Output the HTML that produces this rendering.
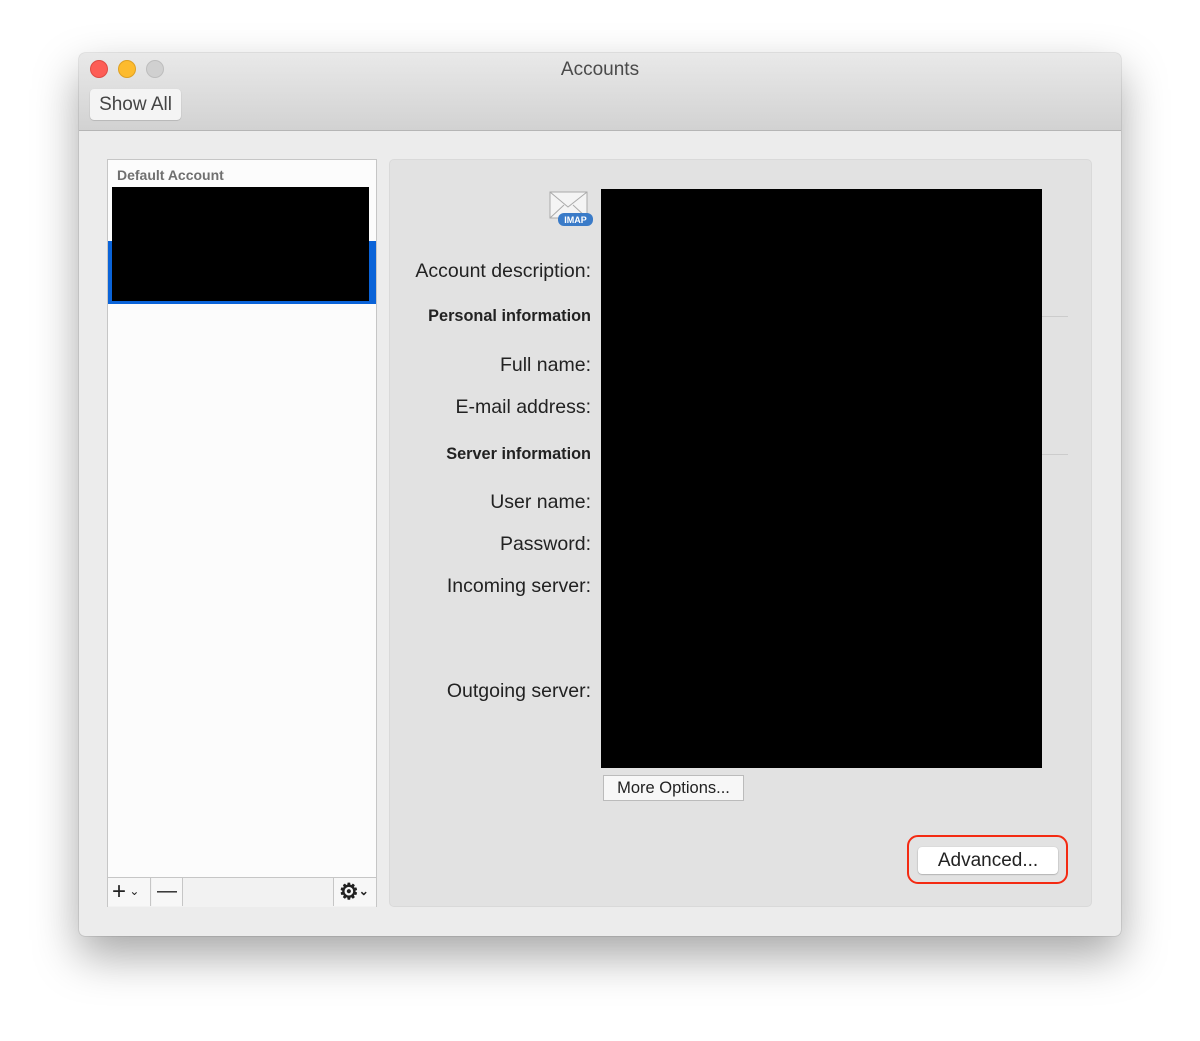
<!DOCTYPE html>
<html><head><style>
body{margin:0;width:1200px;height:1041px;background:#fff;font-family:"Liberation Sans",sans-serif;position:relative;overflow:hidden}
.a{position:absolute}
.win{left:79px;top:53px;width:1042px;height:883px;background:#ececec;border-radius:6px;box-shadow:0 20px 45px rgba(0,0,0,.35),0 0 1px rgba(0,0,0,.5);overflow:hidden}
.tb{left:0;top:0;width:1042px;height:77px;background:linear-gradient(#e9e9e9,#d2d2d2);border-bottom:1px solid #b5b5b5}
.dot{width:16px;height:16px;border-radius:50%;top:7px}
.lbl{right:609px;font-size:19.5px;color:#222;text-align:right;white-space:nowrap}
.b{font-weight:bold;font-size:16.3px}
</style></head><body>
<div class="a win">
 <div class="a tb">
  <div class="a dot" style="left:11px;background:#fd5d56;border:0.5px solid #de4a43"></div>
  <div class="a dot" style="left:39px;background:#fdbb2e;border:0.5px solid #dea023"></div>
  <div class="a dot" style="left:67px;background:#d0d0d0;border:0.5px solid #bdbdbd"></div>
  <div class="a" style="left:0;width:1042px;top:6px;text-align:center;font-size:19px;color:#4a4a4a">Accounts</div>
  <div class="a" style="left:11px;top:36px;width:91px;height:31px;background:#f4f4f4;border-radius:4px;box-shadow:0 0.5px 1px rgba(0,0,0,.25);font-size:19px;color:#444;text-align:center;line-height:31px">Show All</div>
 </div>
</div>
<!-- list -->
<div class="a" style="left:107px;top:159px;width:268px;height:746px;background:#fcfcfc;border:1px solid #c6c6c6">
 <div class="a" style="left:9px;top:7px;font-size:14px;font-weight:bold;color:#707070">Default Account</div>
 <div class="a" style="left:0;top:81px;width:268px;height:63px;background:#0a63d8"></div>
 <div class="a" style="left:4px;top:27px;width:257px;height:114px;background:#000"></div>
 <div class="a" style="left:0;top:717px;width:268px;height:29px;background:#f2f2f2;border-top:1px solid #c6c6c6"></div>
 <div class="a" style="left:0;top:718px;width:43px;height:28px;background:#f7f7f7;border-right:1px solid #c6c6c6;font-size:24px;line-height:27px;color:#222;padding-left:4px;box-sizing:border-box">+<span style="font-size:12px;vertical-align:4px"> ⌄</span></div>
 <div class="a" style="left:44px;top:718px;width:30px;height:28px;background:#f7f7f7;border-right:1px solid #c6c6c6;text-align:center;font-size:20px;line-height:26px;color:#222">—</div>
 <div class="a" style="left:225px;top:718px;width:43px;height:28px;background:#f7f7f7;border-left:1px solid #c6c6c6;font-size:22px;font-weight:bold;line-height:27px;color:#222;padding-left:5px;box-sizing:border-box">⚙<span style="font-size:12px;vertical-align:4px">⌄</span></div>
</div>
<!-- right panel -->
<div class="a" style="left:389px;top:159px;width:703px;height:748px;background:#e2e2e2;border-radius:5px;border:1px solid #d9d9d9;box-sizing:border-box"></div>
<div class="a" style="left:1042px;top:316px;width:26px;height:1px;background:#ccc"></div>
<div class="a" style="left:1042px;top:454px;width:26px;height:1px;background:#ccc"></div>
<svg class="a" style="left:548px;top:190px" width="46" height="38"><rect x="2" y="2" width="37" height="26" fill="#f4f4f4" stroke="#aaa"/><path d="M2 2L20 17L39 2M2 28L16 15M39 28L25 15" stroke="#aaa" fill="none"/><rect x="10" y="23" width="35" height="13" rx="6" fill="#3a7bc8"/><text x="27.5" y="33" font-size="9" font-weight="bold" fill="#fff" text-anchor="middle" font-family="Liberation Sans">IMAP</text></svg>
<div class="a" style="left:601px;top:189px;width:441px;height:579px;background:#000"></div>
<div class="a lbl" style="top:260px">Account description:</div>
<div class="a lbl b" style="top:307px">Personal information</div>
<div class="a lbl" style="top:354px">Full name:</div>
<div class="a lbl" style="top:396px">E-mail address:</div>
<div class="a lbl b" style="top:445px">Server information</div>
<div class="a lbl" style="top:491px">User name:</div>
<div class="a lbl" style="top:533px">Password:</div>
<div class="a lbl" style="top:575px">Incoming server:</div>
<div class="a lbl" style="top:680px">Outgoing server:</div>
<div class="a" style="left:603px;top:775px;width:139px;height:24px;background:#f7f7f7;border:1px solid #bbb;font-size:16.5px;text-align:center;line-height:24px;color:#222">More Options...</div>
<div class="a" style="left:907px;top:835px;width:157px;height:45px;border:2.5px solid #f42a12;border-radius:11px"></div>
<div class="a" style="left:918px;top:847px;width:140px;height:27px;background:#fff;border-radius:4px;box-shadow:0 0.5px 1.5px rgba(0,0,0,.35);font-size:19px;text-align:center;line-height:27px;color:#222">Advanced...</div>
</body></html>
